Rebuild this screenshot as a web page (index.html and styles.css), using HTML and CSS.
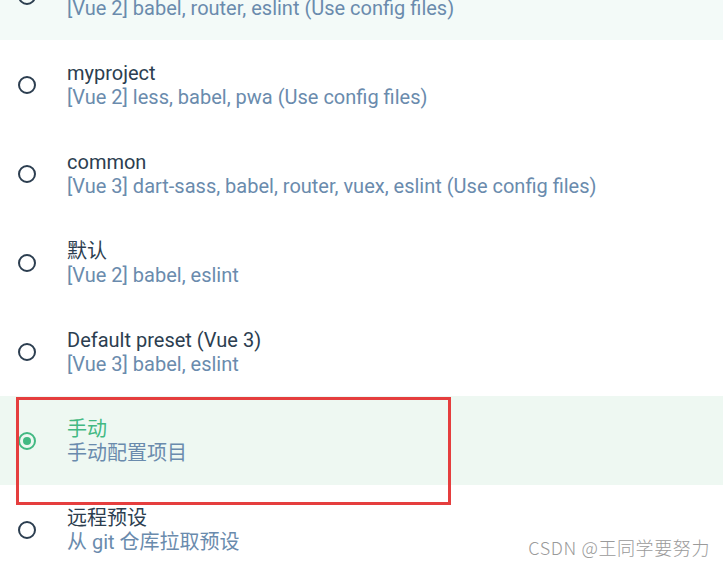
FILE: index.html
```html
<!DOCTYPE html>
<html lang="zh-CN">
<head>
    <meta charset="UTF-8">
    <meta name="viewport" content="width=device-width, initial-scale=1.0">
    <title>创建新项目 - 选择预设</title>
    <link rel="stylesheet" href="styles.css">
</head>
<body>
    <main class="preset-list">
        <div class="preset hover">
            <span class="radio"></span>
            <div class="info">
                <p class="name">vue2-template</p>
                <p class="desc">[Vue 2] babel, router, eslint (Use config files)</p>
            </div>
        </div>

        <div class="preset">
            <span class="radio"></span>
            <div class="info">
                <p class="name">myproject</p>
                <p class="desc">[Vue 2] less, babel, pwa (Use config files)</p>
            </div>
        </div>

        <div class="preset">
            <span class="radio"></span>
            <div class="info">
                <p class="name">common</p>
                <p class="desc">[Vue 3] dart-sass, babel, router, vuex, eslint (Use config files)</p>
            </div>
        </div>

        <div class="preset">
            <span class="radio"></span>
            <div class="info">
                <p class="name">默认</p>
                <p class="desc">[Vue 2] babel, eslint</p>
            </div>
        </div>

        <div class="preset">
            <span class="radio"></span>
            <div class="info">
                <p class="name">Default preset (Vue 3)</p>
                <p class="desc">[Vue 3] babel, eslint</p>
            </div>
        </div>

        <div class="preset selected">
            <span class="radio"></span>
            <div class="info">
                <p class="name">手动</p>
                <p class="desc">手动配置项目</p>
            </div>
            <span class="mark"></span>
        </div>

        <div class="preset">
            <span class="radio"></span>
            <div class="info">
                <p class="name">远程预设</p>
                <p class="desc">从 git 仓库拉取预设</p>
            </div>
        </div>
    </main>

    <div class="watermark">CSDN @王同学要努力</div>
</body>
</html>
```

FILE: styles.css
```css
* {
    margin: 0;
    padding: 0;
    box-sizing: border-box;
}

body {
    background-color: white;
    color: #2c3e50;
    font-family: Roboto, "Noto Sans CJK SC", sans-serif;
    overflow: hidden;
    height: 568px;
}

.preset-list {
    margin-top: -49px;
}

.preset {
    position: relative;
    display: flex;
    align-items: center;
    height: 89px;
    padding-left: 18px;
}

.preset.hover {
    background-color: #f3faf8;
}

.preset.selected {
    background-color: #eef8f2;
}

.radio {
    width: 18px;
    height: 18px;
    border: 2px solid #2c3e50;
    border-radius: 50%;
    margin-right: 31px;
    flex-shrink: 0;
    display: flex;
    align-items: center;
    justify-content: center;
}

.selected .radio {
    border-color: #42b983;
}

.selected .radio::after {
    content: "";
    width: 8px;
    height: 8px;
    border-radius: 50%;
    background-color: #42b983;
}

.name {
    font-size: 20px;
    line-height: 24px;
}

.selected .name {
    color: #42b983;
}

.desc {
    font-size: 20px;
    line-height: 24px;
    color: #6a8bad;
}

/* red frame drawn around the chosen option */
.mark {
    position: absolute;
    left: 16px;
    top: 1px;
    width: 435px;
    height: 108px;
    border: 3px solid #e53e3e;
}

.watermark {
    position: absolute;
    right: 13px;
    bottom: 8px;
    font-family: "Noto Sans CJK SC", sans-serif;
    font-size: 18px;
    font-weight: 300;
    letter-spacing: 0.6px;
    color: #9a9a9a;
}
```
